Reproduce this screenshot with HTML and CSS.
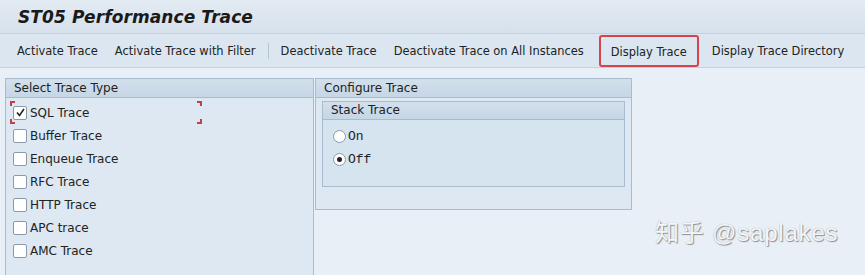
FILE: index.html
```html
<!DOCTYPE html>
<html>
<head>
<meta charset="utf-8">
<link rel="stylesheet" href="styles.css">
</head>
<body>
<div class="app">
  <div class="titlebar"><h1 class="title">ST05 Performance Trace</h1></div>
  <div class="toolbar">
    <span class="tb-item">Activate Trace</span>
    <span class="tb-item">Activate Trace with Filter</span>
    <span class="tb-sep"></span>
    <span class="tb-item">Deactivate Trace</span>
    <span class="tb-item">Deactivate Trace on All Instances</span>
    <span class="tb-item tb-hl">Display Trace</span>
    <span class="tb-item">Display Trace Directory</span>
  </div>
  <div class="content">
    <div class="panel panel-left">
      <div class="panel-head">Select Trace Type</div>
      <div class="panel-body list">
        <label class="cb-row focus"><span class="cb checked"><svg width="11" height="11" viewBox="0 0 11 11"><path d="M2 5.5 L4.5 8.5 L9 2" fill="none" stroke="#222" stroke-width="1.6"/></svg></span>SQL Trace
          <i class="br tl"></i><i class="br tr"></i><i class="br bl"></i><i class="br brr"></i></label>
        <label class="cb-row"><span class="cb"></span>Buffer Trace</label>
        <label class="cb-row"><span class="cb"></span>Enqueue Trace</label>
        <label class="cb-row"><span class="cb"></span>RFC Trace</label>
        <label class="cb-row"><span class="cb"></span>HTTP Trace</label>
        <label class="cb-row"><span class="cb"></span>APC trace</label>
        <label class="cb-row"><span class="cb"></span>AMC Trace</label>
      </div>
    </div>
    <div class="panel panel-right">
      <div class="panel-head">Configure Trace</div>
      <div class="panel-body cfg">
        <div class="group">
          <div class="group-head">Stack Trace</div>
          <div class="group-body">
            <label class="rb-row"><span class="rb"></span>On</label>
            <label class="rb-row"><span class="rb on"></span>Off</label>
          </div>
        </div>
      </div>
    </div>
    <div class="watermark">知乎 @saplakes</div>
  </div>
</div>
</body>
</html>
```
FILE: styles.css
```css
* { box-sizing: border-box; }
html, body { margin: 0; padding: 0; }
body {
  width: 865px; height: 275px; overflow: hidden;
  background: #e9eff6;
  font-family: "DejaVu Sans", "Liberation Sans", sans-serif;
  color: #222;
}
.app { display: flex; flex-direction: column; height: 275px; }
.titlebar {
  flex-shrink: 0;
  height: 34px;
  background: linear-gradient(#e3ebf3, #d6e1ec);
  border-bottom: 1px solid #c3d1de;
  padding-left: 18px;
  display: flex; align-items: center;
}
.title {
  margin: 0;
  font-family: "DejaVu Sans", sans-serif;
  font-weight: bold; font-style: italic;
  font-size: 17px; letter-spacing: 0.1px;
  color: #1a1a1a;
}
.toolbar {
  flex-shrink: 0;
  height: 34px;
  background: #dce6f0;
  border-bottom: 1px solid #c5d3e0;
  display: flex; align-items: center;
  padding-left: 17px;
  font-size: 11.45px;
}
.tb-item {
  margin-right: 17px;
  height: 33px; line-height: 35px;
  white-space: nowrap;
}
.tb-sep { width: 1px; height: 16px; background: #b5c4d2; margin: 0 12px 0 -5px; }
.tb-hl {
  border: 2px solid #d6434c; border-radius: 3px;
  height: 32px; line-height: 31px; padding: 0 10px;
  margin-left: -2px; margin-right: 13px;
}
.content { position: relative; flex: 1; display: flex; align-items: flex-start; padding: 10px 0 0 5px; gap: 1px; }
.panel { flex-shrink: 0; border: 1px solid #a9bccf; background: #dde8f2; display: flex; flex-direction: column; }
.panel-left { width: 309px; height: 210px; }
.panel-right { width: 317px; height: 132px; }
.panel-head {
  height: 19px; line-height: 18px;
  background: linear-gradient(#d3e0ec, #c5d6e5);
  border-bottom: 1px solid #a9bccf;
  padding-left: 8px; font-size: 12px;
}
.list { padding: 3px 0 0 7px; position: relative; }
.cb-row { display: flex; align-items: center; height: 23px; font-size: 12px; position: relative; width: 186px; }
.cb {
  width: 14px; height: 14px;
  border: 1px solid #8a9aab; border-radius: 2px;
  background: #fff; margin-right: 3px;
  display: flex; align-items: center; justify-content: center;
}
.br { position: absolute; width: 5px; height: 5px; border-color: #c0414a; border-style: solid; border-width: 0; }
.br.tl { left: -3px; top: 0; border-left-width: 2px; border-top-width: 2px; }
.br.tr { right: -3px; top: 0; border-right-width: 2px; border-top-width: 2px; }
.br.bl { left: -3px; bottom: 0; border-left-width: 2px; border-bottom-width: 2px; }
.br.brr { right: -3px; bottom: 0; border-right-width: 2px; border-bottom-width: 2px; }
.cfg { padding: 3px 6px 0 6px; }
.group { border: 1px solid #a9bccf; background: #d6e4f0; height: 86px; }
.group-head {
  height: 18px; line-height: 17px;
  background: linear-gradient(#d3e0ec, #c5d6e5);
  border-bottom: 1px solid #a9bccf;
  padding-left: 8px; font-size: 12px;
}
.group-body { padding: 5px 0 0 10px; }
.rb-row { display: flex; align-items: center; height: 23px; font-family: "Liberation Mono", monospace; font-size: 13px; }
.rb {
  width: 13px; height: 13px; border-radius: 50%;
  border: 1px solid #8a9aab; background: #fff; margin-right: 2px;
  display: flex; align-items: center; justify-content: center;
}
.rb.on::after { content: ""; width: 5px; height: 5px; border-radius: 50%; background: #222; }
.watermark {
  position: absolute; left: 655px; top: 145px;
  font-family: "Liberation Sans", "Noto Sans CJK SC", sans-serif;
  font-size: 24px; color: #f4f6f9;
  text-shadow: 1px 1px 1px #8c9096, 0 0 1px #9aa0a6;
  letter-spacing: 0.8px;
}
```
